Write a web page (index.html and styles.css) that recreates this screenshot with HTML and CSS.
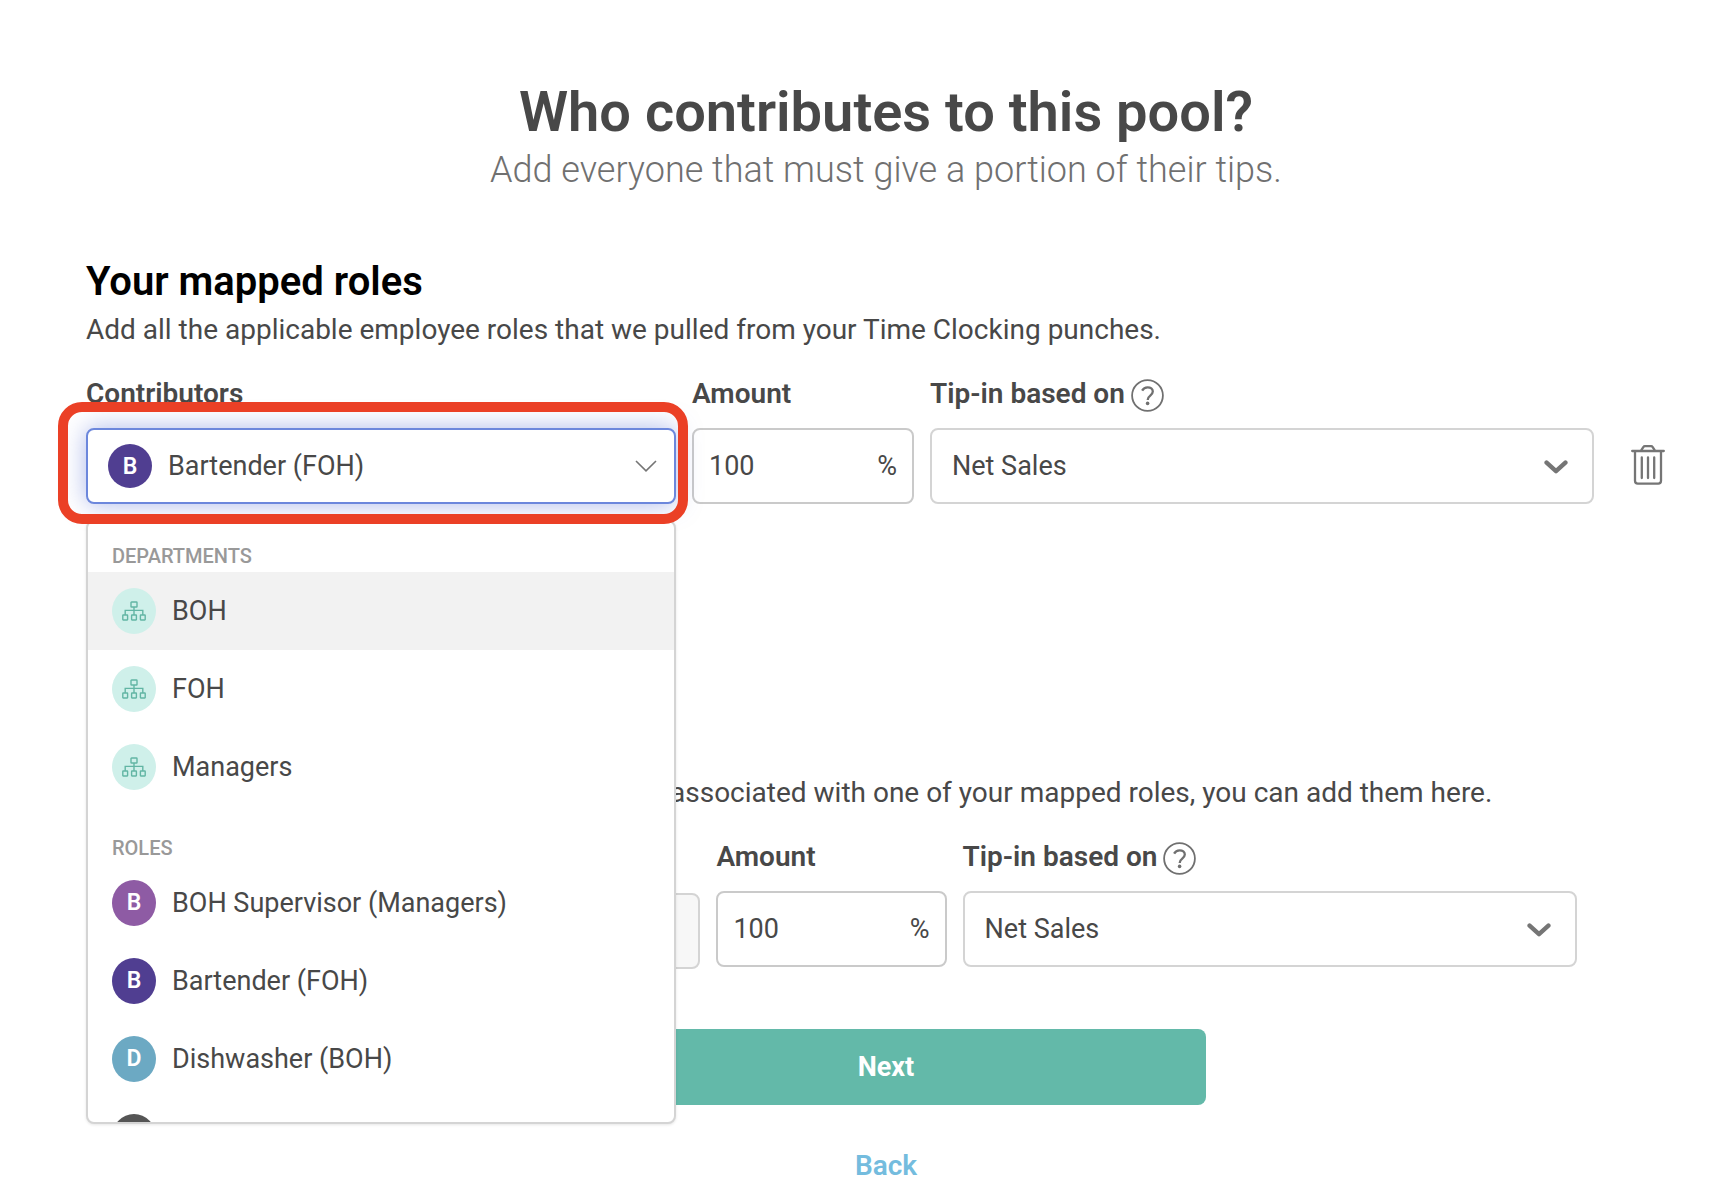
FILE: index.html
```
<!DOCTYPE html>
<html lang="en">
<head>
    <meta charset="UTF-8">
    <meta name="viewport" content="width=device-width, initial-scale=1.0">
    <title>Who contributes to this pool?</title>
    <link rel="stylesheet" href="styles.css">
</head>
<body>
    <!-- Shared icons -->
    <svg class="icon-defs" aria-hidden="true">
        <symbol id="icon-org" viewBox="0 0 24 20">
            <g fill="none" stroke="#62b5a4" stroke-width="1.4">
                <rect x="9" y="1" width="6" height="5" rx="0.6"/>
                <path d="M12 6v8M3.2 14V9.4h17.6V14"/>
                <rect x="0.8" y="14" width="4.8" height="5" rx="0.4"/>
                <rect x="9.6" y="14" width="4.8" height="5" rx="0.4"/>
                <rect x="18.4" y="14" width="4.8" height="5" rx="0.4"/>
            </g>
        </symbol>
        <symbol id="icon-help" viewBox="0 0 33 33">
            <g fill="none" stroke="#707070" stroke-width="1.8">
                <circle cx="16.5" cy="16.5" r="15.4"/>
                <path stroke-width="2.3" d="M11.1 11.6c1.2-2.2 3.1-3.3 5.5-3.3 3 0 5.2 1.7 5.2 4.2 0 4-5 4.1-5 8v.6"/>
            </g>
            <circle cx="16.6" cy="24.4" r="1.8" fill="#707070"/>
        </symbol>
        <symbol id="icon-chevron" viewBox="0 0 24 14">
            <path fill="none" stroke="#757575" stroke-width="4.4" stroke-linecap="round" stroke-linejoin="round" d="M2.6 2.6 12 11.2l9.4-8.6"/>
        </symbol>
    </svg>

    <main class="page">
        <header class="page-header">
            <h1>Who contributes to this pool?</h1>
            <p>Add everyone that must give a portion of their tips.</p>
        </header>

        <form action="/submit" method="post">
            <section class="section">
                <h2>Your mapped roles</h2>
                <p class="description">Add all the applicable employee roles that we pulled from your Time Clocking punches.</p>

                <div class="row row-roles">
                    <div class="field">
                        <label for="contributors">Contributors</label>
                        <div class="dropdown">
                            <button type="button" id="contributors" class="dropdown-toggle" aria-haspopup="listbox" aria-expanded="true">
                                <span class="badge indigo">B</span>
                                <span class="dropdown-text">Bartender (FOH)</span>
                                <svg class="thin-chevron" viewBox="0 0 22 12" aria-hidden="true"><path fill="none" stroke="#757575" stroke-width="1.6" d="M1 1l10 9.8L21 1"/></svg>
                            </button>
                            <div class="dropdown-menu" role="listbox">
                                <div class="group-title">DEPARTMENTS</div>
                                <ul>
                                    <li class="active" role="option"><span class="badge mint"><svg class="org-icon"><use href="#icon-org"/></svg></span>BOH</li>
                                    <li role="option"><span class="badge mint"><svg class="org-icon"><use href="#icon-org"/></svg></span>FOH</li>
                                    <li role="option"><span class="badge mint"><svg class="org-icon"><use href="#icon-org"/></svg></span>Managers</li>
                                </ul>
                                <div class="group-title">ROLES</div>
                                <ul>
                                    <li role="option"><span class="badge purple">B</span>BOH Supervisor (Managers)</li>
                                    <li role="option"><span class="badge indigo">B</span>Bartender (FOH)</li>
                                    <li role="option"><span class="badge blue">D</span>Dishwasher (BOH)</li>
                                    <li role="option"><span class="badge gray"></span></li>
                                </ul>
                            </div>
                            <div class="highlight"></div>
                        </div>
                    </div>
                    <div class="field">
                        <label for="amount">Amount</label>
                        <div class="amount-box">
                            <input type="text" id="amount" name="amount" value="100">
                            <span>%</span>
                        </div>
                    </div>
                    <div class="field">
                        <label for="based_on">Tip-in based on <svg class="help-icon"><use href="#icon-help"/></svg></label>
                        <div class="select-box">
                            <select id="based_on" name="based_on">
                                <option>Net Sales</option>
                            </select>
                            <svg class="select-arrow"><use href="#icon-chevron"/></svg>
                        </div>
                    </div>
                    <button type="button" class="delete-button" aria-label="Delete">
                        <svg viewBox="0 0 34 40" aria-hidden="true">
                            <g fill="none" stroke="#757575" stroke-width="2.3" stroke-linecap="round" stroke-linejoin="round">
                                <path d="M1.200 6h31.600M10 5.600l2.300-3.500c.4-.6.900-.9 1.600-.9h6.200c.7 0 1.200.3 1.600.9L24 5.600"/>
                                <path d="M4 6.500v29.300c0 1.700 1 2.900 2.800 2.900h20.400c1.800 0 2.800-1.200 2.800-2.900V6.500"/>
                                <path d="M10.800 12.500V33M17 12.500V33M23.200 12.500V33"/>
                            </g>
                        </svg>
                    </button>
                </div>
            </section>

            <section class="section">
                <p class="description employees-text">associated with one of your mapped roles, you can add them here.</p>

                <div class="row row-employees">
                    <div class="field field-bottom">
                        <input type="text" class="disabled-box" name="employee" aria-label="Employee" disabled>
                    </div>
                    <div class="field">
                        <label for="employee_amount">Amount</label>
                        <div class="amount-box">
                            <input type="text" id="employee_amount" name="employee_amount" value="100">
                            <span>%</span>
                        </div>
                    </div>
                    <div class="field">
                        <label for="employee_based_on">Tip-in based on <svg class="help-icon"><use href="#icon-help"/></svg></label>
                        <div class="select-box">
                            <select id="employee_based_on" name="employee_based_on">
                                <option>Net Sales</option>
                            </select>
                            <svg class="select-arrow"><use href="#icon-chevron"/></svg>
                        </div>
                    </div>
                </div>
            </section>

            <div class="actions">
                <button type="submit" class="next-button">Next</button>
                <a href="#" class="back-link">Back</a>
            </div>
        </form>
    </main>
</body>
</html>
```
FILE: styles.css
```
* {
    box-sizing: border-box;
}
body {
    font-family: Roboto, Arial, sans-serif;
    font-size: 28px;
    line-height: 36px;
    color: #484848;
    background-color: #fff;
    margin: 0;
}
h1, h2, p, ul {
    margin: 0;
    padding: 0;
}
.icon-defs {
    display: none;
}
.page {
    padding: 80px 32px 20px 86px;
}
.page-header {
    text-align: center;
    margin-bottom: 66px;
}
h1 {
    font-size: 56px;
    line-height: 64px;
    font-weight: 600;
}
.page-header p {
    margin-top: 4px;
    font-size: 36px;
    line-height: 44px;
    font-weight: 300;
    color: #707070;
}
h2 {
    font-size: 40px;
    line-height: 48px;
    font-weight: 600;
    color: #000;
    margin-bottom: 6px;
}
.description {
    margin-bottom: 28px;
}
.employees-text {
    margin-top: 271px;
    padding-left: 584px;
}

/* Form rows */
.row {
    display: grid;
    gap: 16px;
}
.row-roles {
    grid-template-columns: 590fr 222fr 664fr 76px;
}
.row-employees {
    grid-template-columns: 614fr 230fr 614fr;
    margin-right: 109px;
    min-height: 130px;
}
.field {
    min-width: 0;
}
.field-bottom {
    align-self: end;
}
label {
    display: flex;
    align-items: flex-end;
    gap: 6px;
    height: 36px;
    margin-bottom: 16px;
    font-weight: 600;
}
.help-icon {
    width: 33px;
    height: 33px;
}
input, select, button {
    font-family: inherit;
    font-size: 27px;
    color: inherit;
}
.amount-box {
    display: flex;
    align-items: center;
    height: 76px;
    padding: 0 15px;
    border: 2px solid #cacaca;
    border-radius: 8px;
    font-size: 27px;
}
.amount-box input {
    flex: 1;
    min-width: 0;
    padding: 0;
    border: none;
    outline: none;
    background: none;
}
.select-box {
    position: relative;
}
select {
    display: block;
    appearance: none;
    width: 100%;
    height: 76px;
    padding: 0 60px 0 20px;
    border: 2px solid #d4d4d4;
    border-radius: 8px;
    background-color: #fff;
}
.select-arrow {
    position: absolute;
    top: 32px;
    right: 26px;
    width: 24px;
    height: 14px;
    pointer-events: none;
}
.disabled-box {
    display: block;
    width: 100%;
    height: 76px;
    border: 2px solid #d4d4d4;
    border-radius: 8px;
    background-color: #f7f7f7;
}
.delete-button {
    display: flex;
    align-items: center;
    justify-content: center;
    align-self: end;
    height: 76px;
    padding: 0 0 2px;
    border: none;
    background: none;
    cursor: pointer;
}
.delete-button svg {
    width: 34px;
    height: 40px;
}

/* Contributors dropdown */
.dropdown {
    position: relative;
    font-size: 27px;
}
.dropdown-toggle {
    display: flex;
    align-items: center;
    width: 100%;
    height: 76px;
    padding: 0 17px 0 20px;
    border: 2px solid #6c87dc;
    border-radius: 8px;
    background-color: #fff;
    box-shadow: 0 0 24px rgba(92, 116, 215, 0.5);
    text-align: left;
    cursor: pointer;
}
.dropdown-text {
    flex: 1;
}
.thin-chevron {
    width: 22px;
    height: 12px;
}
.badge {
    display: flex;
    align-items: center;
    justify-content: center;
    flex: none;
    width: 44px;
    height: 44px;
    margin-right: 16px;
    border-radius: 50%;
    font-size: 23px;
    font-weight: 600;
    color: #fff;
}
.mint {
    background-color: #cff0ea;
}
.indigo {
    background-color: #503e91;
}
.purple {
    background-color: #8e5ba4;
}
.blue {
    background-color: #6ca9c3;
}
.gray {
    background-color: #555;
}
.org-icon {
    width: 24px;
    height: 20px;
}
.dropdown-menu {
    position: absolute;
    top: 92px;
    left: 0;
    right: 0;
    z-index: 10;
    height: 604px;
    overflow: hidden;
    border: 2px solid #d4d4d4;
    border-radius: 8px;
    background-color: #fff;
    box-shadow: 0 1px 3px rgba(0, 0, 0, 0.1);
}
.dropdown-menu ul {
    list-style: none;
    margin-bottom: 8px;
}
.group-title {
    height: 50px;
    padding: 20px 24px 0;
    font-size: 20px;
    line-height: 28px;
    font-weight: 500;
    color: #999;
}
.dropdown-menu li {
    display: flex;
    align-items: center;
    height: 78px;
    padding: 0 24px;
    cursor: pointer;
}
.dropdown-menu li.active {
    background-color: #f2f2f2;
}
.dropdown-menu .badge {
    height: 46px;
}
.highlight {
    position: absolute;
    top: -26px;
    right: -12px;
    bottom: -20px;
    left: -28px;
    z-index: 20;
    border: 10px solid #eb4026;
    border-radius: 24px;
    pointer-events: none;
}

/* Buttons */
.actions {
    display: flex;
    flex-direction: column;
    align-items: center;
    margin-top: 60px;
}
.next-button {
    width: 40%;
    height: 76px;
    margin-bottom: 43px;
    border: none;
    border-radius: 8px;
    background-color: #63b9a9;
    color: #fff;
    font-weight: 700;
    cursor: pointer;
}
.next-button:hover {
    background-color: #56a999;
}
.back-link {
    color: #74bcde;
    font-weight: 600;
    text-decoration: none;
}
```
